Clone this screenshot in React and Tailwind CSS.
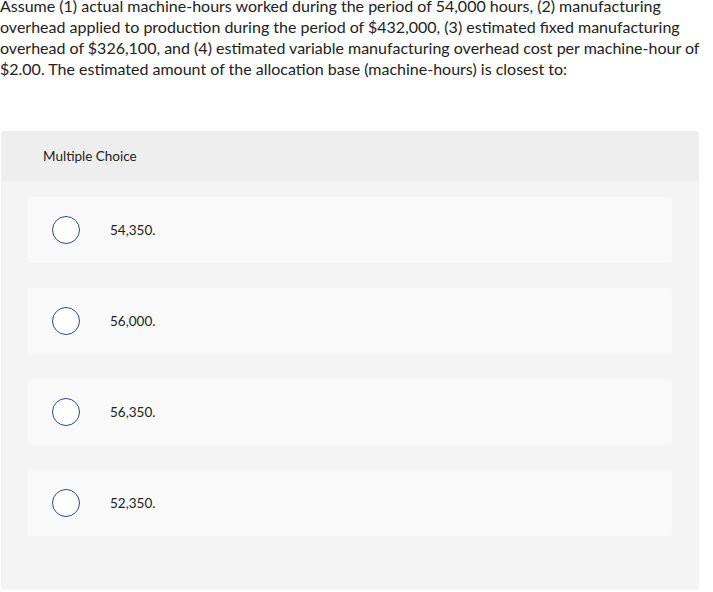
import React from "react";

const options = ["54,350.", "56,000.", "56,350.", "52,350."];

export default function App() {
  return (
    <div className="w-[713px] h-[592px] overflow-hidden bg-white font-['Lato','Open_Sans',sans-serif] text-[#222]">
      <p className="-mt-[5px] text-[16px] leading-[21px] pr-2">
        Assume (1) actual machine-hours worked during the period of 54,000 hours, (2) manufacturing
        overhead applied to production during the period of $432,000, (3) estimated fixed manufacturing
        overhead of $326,100, and (4) estimated variable manufacturing overhead cost per machine-hour of
        $2.00. The estimated amount of the allocation base (machine-hours) is closest to:
      </p>

      <div className="mt-[52px] ml-px w-[698px] h-[459px] rounded-[3px] bg-[#f4f4f4] overflow-hidden">
        <div className="h-[50px] bg-[#eeeeee] flex items-center pl-[42px] text-[13.5px]">
          Multiple Choice
        </div>
        <div className="flex flex-col gap-[25px] pt-[16px] pl-[26px] pr-[27px]">
          {options.map((o) => (
            <div key={o} className="h-[66px] rounded-[3px] bg-[#f9f9f9] flex items-center pl-[25px]">
              <span className="w-[28px] h-[28px] rounded-full border-[1.5px] border-[#2d4b8a] bg-white shrink-0" />
              <span className="ml-[30px] text-[13.5px]">{o}</span>
            </div>
          ))}
        </div>
      </div>
    </div>
  );
}
